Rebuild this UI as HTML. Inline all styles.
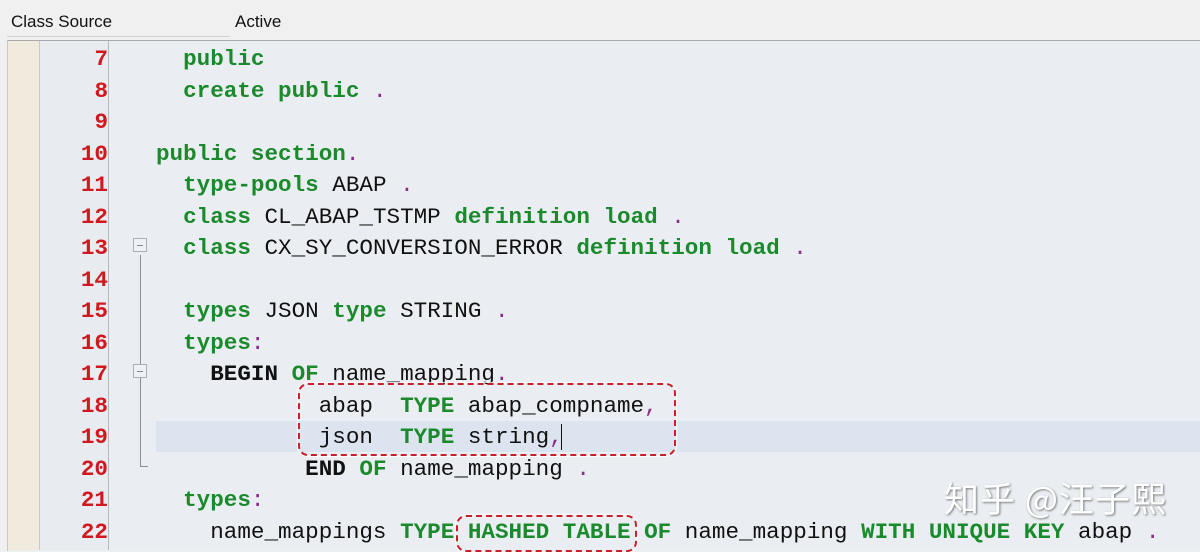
<!DOCTYPE html>
<html><head><meta charset="utf-8"><style>
body{margin:0;width:1200px;height:550px;overflow:hidden;background:#f0f0f0;position:relative;font-family:"Liberation Sans",sans-serif}
.hdr{position:absolute;top:12px;font-size:17px;color:#111}
.ed{position:absolute;left:7px;top:40px;width:1193px;height:510px;background:#eaeef2;border-top:1px solid #a8a8a8;border-left:1px solid #c8c8c8}
.beige{position:absolute;left:8px;top:41px;width:31px;height:509px;background:#f1ebdd;border-right:1px solid #c8c8c8}
.nums{position:absolute;left:40px;top:41px;width:68px;height:509px;background:#e8ecf0;border-right:1px solid #b8b8b8}
.hl{position:absolute;left:156px;top:421px;width:1044px;height:31px;background:#dce5ef}
pre{margin:0;position:absolute;top:44px;font-family:"Liberation Mono",monospace;font-size:22.6px;line-height:31.5px}
.n{left:40px;width:68px;text-align:right;color:#d01820;font-weight:bold}
.c{left:156px;color:#111}
.g{color:#1b8a2c;font-weight:bold}
.b{font-weight:bold}
.p{color:#8a2a8a}
.fold{position:absolute;left:133px;width:14px;height:14px;border:1px solid #a8b0b8;background:#eef1f4;box-sizing:border-box}
.fold:after{content:"";position:absolute;left:3px;top:6px;width:6px;height:1px;background:#889}
.box{position:absolute;border:2px dashed #c8202a;border-radius:10px;box-shadow:0 0 2px #fff,0 0 0 1px rgba(255,255,255,.6)}
.wm{position:absolute;left:944px;top:472px;font-size:35px;color:#fff;font-family:"Noto Sans CJK SC",sans-serif;text-shadow:1px 1px 2px #777;letter-spacing:1px}
</style></head><body>
<div class="hdr" style="left:11px">Class Source</div>
<div class="hdr" style="left:235px">Active</div>
<div style="position:absolute;left:7px;top:36px;width:223px;height:1px;background:#d0d0d0"></div>
<div class="ed"></div>
<div class="beige"></div>
<div class="nums"></div>
<div class="hl"></div>
<div style="position:absolute;left:140px;top:255px;width:1px;height:212px;background:#8a8f96"></div>
<div style="position:absolute;left:140px;top:466px;width:8px;height:1px;background:#8a8f96"></div>
<div class="fold" style="top:238px"></div>
<div class="fold" style="top:364px"></div>
<pre class="n">7
8
9
10
11
12
13
14
15
16
17
18
19
20
21
22</pre>
<pre class="c">  <span class="g">public</span>
  <span class="g">create public</span> <span class="p">.</span>

<span class="g">public section</span><span class="p">.</span>
  <span class="g">type-pools</span> ABAP <span class="p">.</span>
  <span class="g">class</span> CL_ABAP_TSTMP <span class="g">definition load</span> <span class="p">.</span>
  <span class="g">class</span> CX_SY_CONVERSION_ERROR <span class="g">definition load</span> <span class="p">.</span>

  <span class="g">types</span> JSON <span class="g">type</span> STRING <span class="p">.</span>
  <span class="g">types</span><span class="p">:</span>
    <span class="b">BEGIN</span> <span class="g">OF</span> name_mapping<span class="p">.</span>
            abap  <span class="g">TYPE</span> abap_compname<span class="p">,</span>
            json  <span class="g">TYPE</span> string<span class="p">,</span>
           <span class="b">END</span> <span class="g">OF</span> name_mapping <span class="p">.</span>
  <span class="g">types</span><span class="p">:</span>
    name_mappings <span class="g">TYPE HASHED TABLE OF</span> name_mapping <span class="g">WITH UNIQUE KEY</span> abap <span class="p">.</span></pre>
<div style="position:absolute;left:561px;top:424px;width:1px;height:26px;background:#111"></div>
<div class="box" style="left:298px;top:383px;width:374px;height:69px"></div>
<div class="box" style="left:456px;top:515px;width:177px;height:33px"></div>
<div class="wm">知乎 @汪子熙</div>
</body></html>
